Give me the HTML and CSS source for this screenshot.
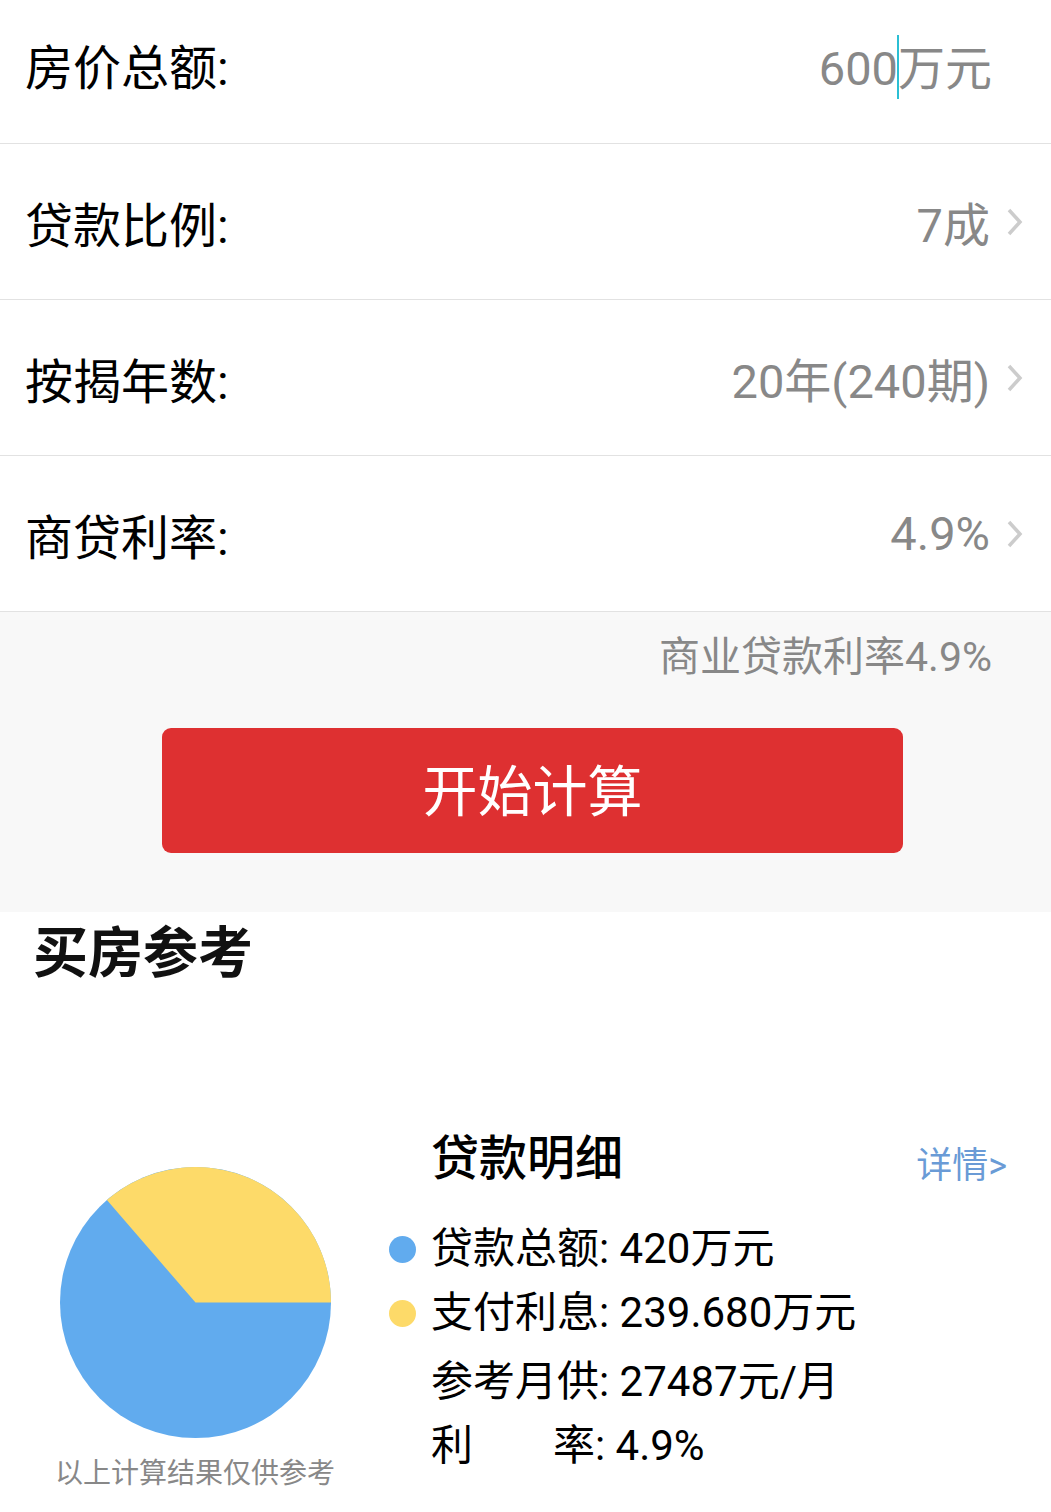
FILE: index.html
```html
<!DOCTYPE html>
<html lang="zh-CN">
<head>
    <meta charset="UTF-8">
    <meta name="viewport" content="width=device-width, initial-scale=1.0">
    <title>房贷计算器</title>
    <link rel="stylesheet" href="styles.css">
</head>
<body>
    <!-- Input rows -->
    <div class="form">
        <div class="row row-first">
            <span class="label">房价总额:</span>
            <span class="value">600<i class="cursor"></i>万元</span>
        </div>
        <div class="row">
            <span class="label">贷款比例:</span>
            <span class="value">7成</span>
            <svg class="chevron" viewBox="0 0 16 28"><polyline points="2,2 13,14 2,26"/></svg>
        </div>
        <div class="row">
            <span class="label">按揭年数:</span>
            <span class="value">20年(240期)</span>
            <svg class="chevron" viewBox="0 0 16 28"><polyline points="2,2 13,14 2,26"/></svg>
        </div>
        <div class="row">
            <span class="label">商贷利率:</span>
            <span class="value">4.9%</span>
            <svg class="chevron" viewBox="0 0 16 28"><polyline points="2,2 13,14 2,26"/></svg>
        </div>
    </div>

    <div class="calc">
        <p class="rate-note">商业贷款利率4.9%</p>
        <button class="calc-btn" type="button">开始计算</button>
    </div>

    <!-- Result section -->
    <section class="reference">
        <h2>买房参考</h2>
        <div class="detail">
            <div class="chart">
                <svg class="pie" viewBox="0 0 271 271">
                    <circle cx="135.5" cy="135.5" r="135.5" fill="#61abee"/>
                    <path d="M135.5 135.5 L271 135.5 A135.5 135.5 0 0 0 46.9 33 Z" fill="#fdda69"/>
                </svg>
                <p class="chart-note">以上计算结果仅供参考</p>
            </div>
            <div class="summary">
                <div class="summary-head">
                    <h3>贷款明细</h3>
                    <a class="more" href="#">详情&gt;</a>
                </div>
                <ul class="items">
                    <li><span class="dot blue"></span><span class="name">贷款总额</span>: 420万元</li>
                    <li><span class="dot yellow"></span><span class="name">支付利息</span>: 239.680万元</li>
                    <li class="plain"><span class="name">参考月供</span>: 27487元/月</li>
                    <li><span class="name spread"><span>利</span><span>率</span></span>: 4.9%</li>
                </ul>
            </div>
        </div>
    </section>
</body>
</html>
```

FILE: styles.css
```css
/* Global */
body {
    margin: 0;
    padding: 0;
    font-family: Roboto, "Noto Sans CJK SC", sans-serif;
    color: #000;
    background-color: #fff;
}

/* Input rows */
.row {
    display: flex;
    align-items: center;
    height: 155px;
    padding: 0 28px 0 25px;
    border-bottom: 1px solid #e2e2e2;
}

.row-first {
    height: 128px;
    padding-bottom: 15px;
    padding-right: 59px;
}

.label {
    font-size: 48px;
    flex: 1;
}

.value {
    font-size: 47px;
    color: #888;
    white-space: nowrap;
}

.cursor {
    display: inline-block;
    width: 2px;
    height: 64px;
    margin: 0 -1px;
    vertical-align: -14px;
    background-color: #2bbfd4;
}

.chevron {
    width: 16px;
    height: 28px;
    margin-left: 17px;
    fill: none;
    stroke: #cccccc;
    stroke-width: 3.5;
}

/* Calculate block */
.calc {
    background-color: #f8f8f8;
    padding: 22px 0 59px;
}

.rate-note {
    margin: 0 59px 0 0;
    text-align: right;
    font-size: 41px;
    line-height: 46px;
    color: #888;
}

.calc-btn {
    display: block;
    width: 741px;
    height: 125px;
    margin: 48px 0 0 162px;
    padding: 0 0 8px;
    border: none;
    border-radius: 9px;
    background-color: #de3031;
    color: #fff;
    font-family: inherit;
    font-size: 55px;
    cursor: pointer;
}

/* Reference section */
.reference h2 {
    margin: 0;
    padding-left: 33px;
    font-size: 55px;
    font-weight: 700;
    line-height: 82px;
    color: #111;
}

.detail {
    display: flex;
    align-items: flex-start;
    margin-top: 133px;
}

.chart {
    width: 390px;
    padding-top: 40px;
    text-align: center;
}

.pie {
    display: block;
    width: 271px;
    height: 271px;
    margin: 0 auto;
}

.chart-note {
    margin: 16px 0 0;
    font-size: 28px;
    line-height: 40px;
    color: #888;
}

.summary {
    flex: 1;
    padding-right: 44px;
}

.summary-head {
    display: flex;
    align-items: center;
    justify-content: space-between;
    padding-left: 41px;
}

.summary-head h3 {
    margin: 0;
    font-size: 48px;
    font-weight: 500;
    line-height: 64px;
}

.more {
    font-size: 36px;
    color: #6a9bd6;
    text-decoration: none;
    margin-top: 6px;
}

.items {
    list-style: none;
    margin: 26px 0 0;
    padding: 0 0 0 41px;
}

.items li {
    position: relative;
    font-size: 42px;
    line-height: 64px;
    white-space: nowrap;
}

.items li.plain {
    margin-top: 5px;
}

.name {
    display: inline-block;
}

.name.spread {
    display: inline-flex;
    justify-content: space-between;
    width: 164px;
}

.dot {
    position: absolute;
    left: -42px;
    top: 19px;
    width: 27px;
    height: 27px;
    border-radius: 50%;
}

.dot.blue {
    background-color: #61abee;
}

.dot.yellow {
    background-color: #fdda69;
}
```
